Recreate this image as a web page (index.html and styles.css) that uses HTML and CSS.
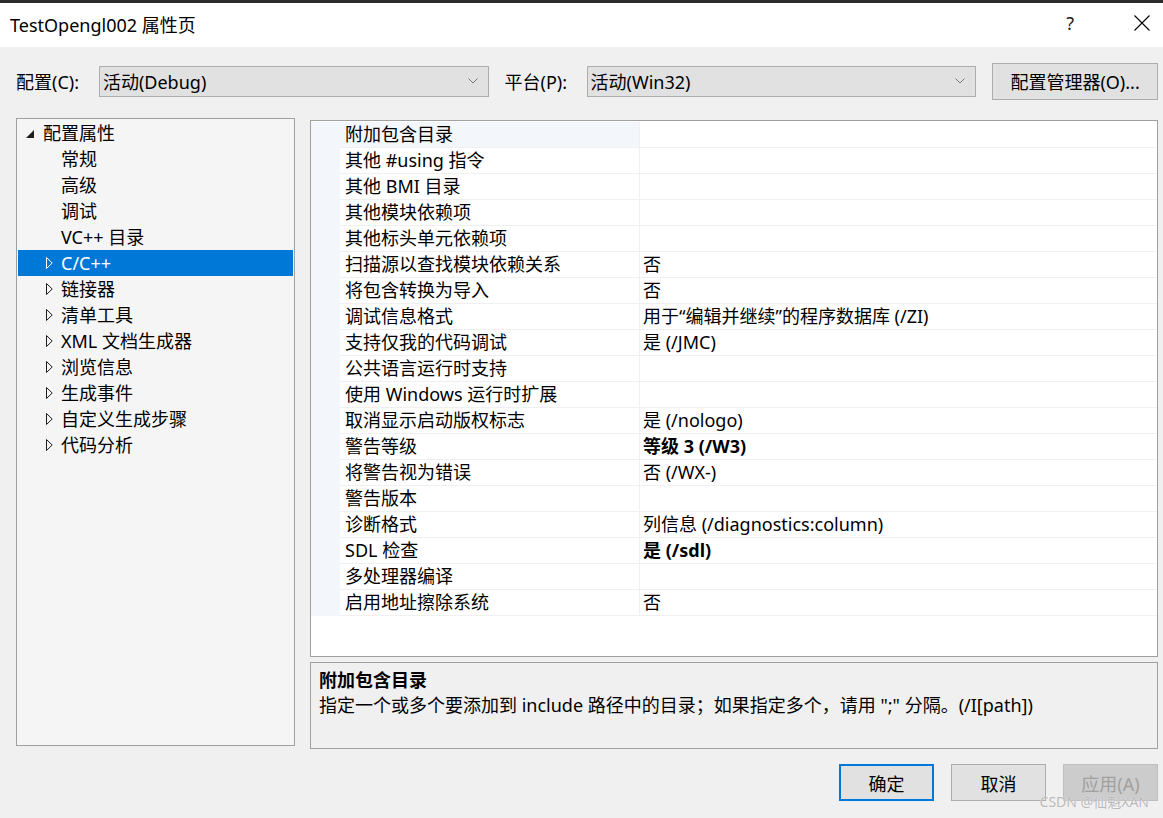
FILE: index.html
```html
<!DOCTYPE html>
<html lang="zh-CN">
<head>
  <meta charset="UTF-8">
  <title>TestOpengl002 属性页</title>
  <link rel="stylesheet" href="styles.css">
</head>
<body>
  <div class="window">
    <div class="titlebar">
      <span class="title">TestOpengl002 属性页</span>
      <span class="help">?</span>
      <svg class="close" width="16" height="16" viewBox="0 0 16 16"><path d="M0.5 0.5 L15.5 15.5 M15.5 0.5 L0.5 15.5" stroke="#000" stroke-width="1.1" fill="none"/></svg>
    </div>

    <div class="dialog">
      <div class="config-row">
        <span class="label">配置(C):</span>
        <div class="combo combo-config">
          <span>活动(Debug)</span>
          <svg class="chevron" width="10" height="6" viewBox="0 0 10 6"><path d="M0.5 0.5 L5 5 L9.5 0.5" stroke="#777" fill="none"/></svg>
        </div>
        <span class="label label-platform">平台(P):</span>
        <div class="combo combo-platform">
          <span>活动(Win32)</span>
          <svg class="chevron" width="10" height="6" viewBox="0 0 10 6"><path d="M0.5 0.5 L5 5 L9.5 0.5" stroke="#777" fill="none"/></svg>
        </div>
        <button class="btn btn-manager">配置管理器(O)...</button>
      </div>

      <div class="main">
        <div class="tree">
          <div class="node root">
            <svg class="arrow" width="8" height="8" viewBox="0 0 8 8"><path d="M8 0 L8 8 L0 8 Z" fill="#1e1e1e"/></svg>
            <span>配置属性</span>
          </div>
          <div class="node leaf">常规</div>
          <div class="node leaf">高级</div>
          <div class="node leaf">调试</div>
          <div class="node leaf">VC++ 目录</div>
          <div class="node group selected">
            <svg class="arrow" width="7" height="12" viewBox="0 0 7 12"><path d="M0.5 0.5 L6.2 6 L0.5 11.5 Z" stroke="#fff" fill="none"/></svg>
            <span>C/C++</span>
          </div>
          <div class="node group">
            <svg class="arrow" width="7" height="12" viewBox="0 0 7 12"><path d="M0.5 0.5 L6.2 6 L0.5 11.5 Z" stroke="#1e1e1e" fill="none"/></svg>
            <span>链接器</span>
          </div>
          <div class="node group">
            <svg class="arrow" width="7" height="12" viewBox="0 0 7 12"><path d="M0.5 0.5 L6.2 6 L0.5 11.5 Z" stroke="#1e1e1e" fill="none"/></svg>
            <span>清单工具</span>
          </div>
          <div class="node group">
            <svg class="arrow" width="7" height="12" viewBox="0 0 7 12"><path d="M0.5 0.5 L6.2 6 L0.5 11.5 Z" stroke="#1e1e1e" fill="none"/></svg>
            <span>XML 文档生成器</span>
          </div>
          <div class="node group">
            <svg class="arrow" width="7" height="12" viewBox="0 0 7 12"><path d="M0.5 0.5 L6.2 6 L0.5 11.5 Z" stroke="#1e1e1e" fill="none"/></svg>
            <span>浏览信息</span>
          </div>
          <div class="node group">
            <svg class="arrow" width="7" height="12" viewBox="0 0 7 12"><path d="M0.5 0.5 L6.2 6 L0.5 11.5 Z" stroke="#1e1e1e" fill="none"/></svg>
            <span>生成事件</span>
          </div>
          <div class="node group">
            <svg class="arrow" width="7" height="12" viewBox="0 0 7 12"><path d="M0.5 0.5 L6.2 6 L0.5 11.5 Z" stroke="#1e1e1e" fill="none"/></svg>
            <span>自定义生成步骤</span>
          </div>
          <div class="node group">
            <svg class="arrow" width="7" height="12" viewBox="0 0 7 12"><path d="M0.5 0.5 L6.2 6 L0.5 11.5 Z" stroke="#1e1e1e" fill="none"/></svg>
            <span>代码分析</span>
          </div>
        </div>

        <div class="right">
          <div class="grid">
            <div class="prop active"><div class="name">附加包含目录</div><div class="value"></div></div>
            <div class="prop"><div class="name">其他 #using 指令</div><div class="value"></div></div>
            <div class="prop"><div class="name">其他 BMI 目录</div><div class="value"></div></div>
            <div class="prop"><div class="name">其他模块依赖项</div><div class="value"></div></div>
            <div class="prop"><div class="name">其他标头单元依赖项</div><div class="value"></div></div>
            <div class="prop"><div class="name">扫描源以查找模块依赖关系</div><div class="value">否</div></div>
            <div class="prop"><div class="name">将包含转换为导入</div><div class="value">否</div></div>
            <div class="prop"><div class="name">调试信息格式</div><div class="value">用于“编辑并继续”的程序数据库 (/ZI)</div></div>
            <div class="prop"><div class="name">支持仅我的代码调试</div><div class="value">是 (/JMC)</div></div>
            <div class="prop"><div class="name">公共语言运行时支持</div><div class="value"></div></div>
            <div class="prop"><div class="name">使用 Windows 运行时扩展</div><div class="value"></div></div>
            <div class="prop"><div class="name">取消显示启动版权标志</div><div class="value">是 (/nologo)</div></div>
            <div class="prop"><div class="name">警告等级</div><div class="value bold">等级 3 (/W3)</div></div>
            <div class="prop"><div class="name">将警告视为错误</div><div class="value">否 (/WX-)</div></div>
            <div class="prop"><div class="name">警告版本</div><div class="value"></div></div>
            <div class="prop"><div class="name">诊断格式</div><div class="value">列信息 (/diagnostics:column)</div></div>
            <div class="prop"><div class="name">SDL 检查</div><div class="value bold">是 (/sdl)</div></div>
            <div class="prop"><div class="name">多处理器编译</div><div class="value"></div></div>
            <div class="prop"><div class="name">启用地址擦除系统</div><div class="value">否</div></div>
          </div>
          <div class="desc">
            <div class="desc-title">附加包含目录</div>
            <div class="desc-text">指定一个或多个要添加到 include 路径中的目录；如果指定多个，请用 ";" 分隔。(/I[path])</div>
          </div>
        </div>
      </div>

      <div class="footer">
        <button class="btn btn-ok">确定</button>
        <button class="btn">取消</button>
        <button class="btn btn-disabled">应用(A)</button>
      </div>
    </div>
    <div class="watermark">CSDN @仙魁XAN</div>
  </div>
</body>
</html>
```

FILE: styles.css
```css
body {
  margin: 0;
  background: #f0f0f0;
  font-family: "Noto Sans", "Noto Sans CJK SC", sans-serif;
  font-size: 18px;
  color: #000;
}

.window {
  position: relative;
  width: 1163px;
  height: 818px;
  border-top: 3px solid #2b2b2b;
  box-sizing: border-box;
  overflow: hidden;
}

.titlebar {
  height: 44px;
  background: #fff;
  display: flex;
  align-items: center;
  padding-left: 10px;
}

.title {
  flex: 1;
  margin-top: -2px;
}

.help {
  color: #222;
  margin-right: 60px;
  margin-top: -4px;
}

.close {
  margin-right: 13px;
  margin-top: -4px;
}

.dialog {
  padding: 16px 5px 0 16px;
}

.config-row {
  display: flex;
  align-items: center;
  height: 36px;
}

.label {
  width: 83px;
}

.label-platform {
  width: 82px;
  margin-left: 16px;
}

.combo {
  height: 31px;
  box-sizing: border-box;
  background: #e1e1e1;
  border: 1px solid #adadad;
  display: flex;
  align-items: center;
  justify-content: space-between;
  padding: 0 10px 0 3px;
}

.combo-config {
  width: 390px;
}

.combo-platform {
  width: 390px;
}

.btn {
  font-family: inherit;
  font-size: 18px;
  background: #e1e1e1;
  border: 1px solid #adadad;
  color: #000;
  padding: 0;
  box-sizing: border-box;
}

.btn-manager {
  width: 166px;
  height: 37px;
  margin-left: 16px;
}

.main {
  display: flex;
  margin-top: 19px;
}

.tree {
  width: 279px;
  height: 628px;
  box-sizing: border-box;
  background: #f5f5f5;
  border: 1px solid #a0a0a0;
  padding: 1px 1px 0 1px;
}

.node {
  height: 26px;
  line-height: 26px;
  display: flex;
  align-items: center;
  white-space: nowrap;
}

.root {
  padding-left: 8px;
}

.root .arrow {
  margin-right: 9px;
  margin-top: 1px;
}

.leaf {
  padding-left: 43px;
}

.group {
  padding-left: 28px;
}

.group .arrow {
  margin-right: 8px;
}

.selected {
  background: #0078d7;
  color: #fff;
}

.right {
  margin-left: 15px;
  width: 848px;
  margin-top: 2px;
}

.grid {
  height: 537px;
  box-sizing: border-box;
  background: #fff;
  border: 1px solid #a0a0a0;
  padding-top: 1px;
  background-image: linear-gradient(#f3f6fb, #f3f6fb);
  background-size: 29px 494px;
  background-repeat: no-repeat;
  background-position: 0 1px;
}

.prop {
  display: flex;
  height: 26px;
  line-height: 25px;
  padding-left: 29px;
  white-space: nowrap;
}

.prop .name {
  width: 294px;
  padding-left: 5px;
  border-bottom: 1px solid #f0f0f0;
  border-right: 1px solid #f0f0f0;
}

.prop .value {
  flex: 1;
  padding-left: 3px;
  border-bottom: 1px solid #f0f0f0;
}

.prop.active .name {
  background: #f3f6fb;
}

.bold {
  font-weight: bold;
}

.desc {
  margin-top: 5px;
  height: 87px;
  box-sizing: border-box;
  border: 1px solid #a0a0a0;
  padding: 4px 8px;
}

.desc-title {
  font-weight: bold;
  line-height: 26px;
}

.desc-text {
  line-height: 24px;
}

.footer {
  display: flex;
  justify-content: flex-end;
  gap: 17px;
  margin-top: 15px;
}

.footer .btn {
  width: 95px;
  height: 37px;
}

.btn-ok {
  border: 2px solid #0078d7;
}

.btn-disabled {
  background: #cccccc;
  border-color: #bfbfbf;
  color: #a0a0a0;
}

.watermark {
  position: absolute;
  right: 14px;
  bottom: 7px;
  font-size: 14px;
  color: #b8b8b8;
  text-shadow: 0 0 1px #fff;
}
```
